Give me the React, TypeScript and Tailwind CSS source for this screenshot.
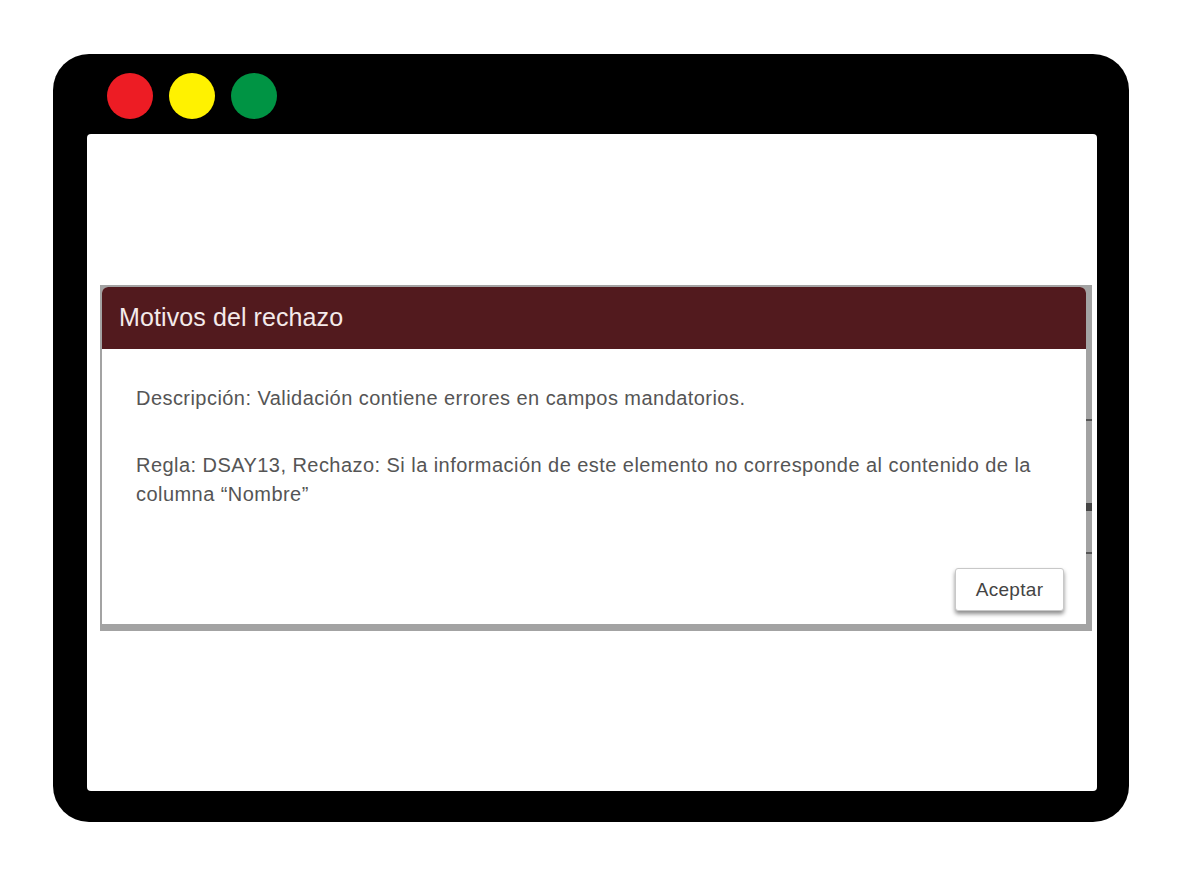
import React from 'react';

const font = { fontFamily: '"Liberation Sans", Arial, sans-serif' };

const Dialog = () => (
  <div className="ml-[13px] mt-[151px] w-[992px] h-[346px] bg-[#a3a3a3] pl-[2px] pt-[2px] pr-[6px] pb-[7px] relative">
    {/* background table lines peeking out on the right */}
    <div className="absolute right-0 top-[134px] w-[6px] h-[2px] bg-[#555]" />
    <div className="absolute right-0 top-[218px] w-[6px] h-[8px] bg-[#444]" />
    <div className="absolute right-0 top-[267px] w-[6px] h-[2px] bg-[#555]" />
    <div className="flex flex-col h-full bg-white rounded-t-[6px]" style={font}>
      <div className="h-[62px] shrink-0 bg-[#521a1e] rounded-t-[6px] flex items-center px-[17px]">
        <span className="text-[25px] text-[#f4eaea] tracking-[0.1px]">Motivos del rechazo</span>
      </div>
      <div className="flex-1 flex flex-col pl-[34px] pr-[40px] pt-[35px] text-[20px] leading-[29px] tracking-[0.45px] text-[#555]">
        <p>Descripción: Validación contiene errores en campos mandatorios.</p>
        <p className="mt-[38px] max-w-[912px]">
          Regla: DSAY13, Rechazo: Si la información de este elemento no corresponde al contenido de la columna “Nombre”
        </p>
        <div className="flex-1" />
        <div className="flex justify-end -mr-[18px] mb-[13px]">
          <button className="w-[109px] h-[43px] bg-white border border-[#c8c8c8] rounded-[3px] shadow-[0_3px_4px_rgba(0,0,0,0.45)] text-[19px] tracking-[0.3px] text-[#444]">
            Aceptar
          </button>
        </div>
      </div>
    </div>
  </div>
);

export default function App() {
  return (
    <div className="w-[1184px] h-[877px] bg-white pt-[54px] pl-[53px]">
      <div className="w-[1076px] h-[768px] bg-black rounded-[36px] flex flex-col pt-[19px] pl-[34px] pr-[32px] pb-[31px]">
        <div className="flex gap-[16px] pl-[20px] h-[61px] shrink-0">
          <div className="w-[46px] h-[46px] rounded-full bg-[#ed1c24]" />
          <div className="w-[46px] h-[46px] rounded-full bg-[#fff200]" />
          <div className="w-[46px] h-[46px] rounded-full bg-[#009444]" />
        </div>
        <div className="flex-1 bg-white rounded-[4px] overflow-hidden">
          <Dialog />
        </div>
      </div>
    </div>
  );
}
